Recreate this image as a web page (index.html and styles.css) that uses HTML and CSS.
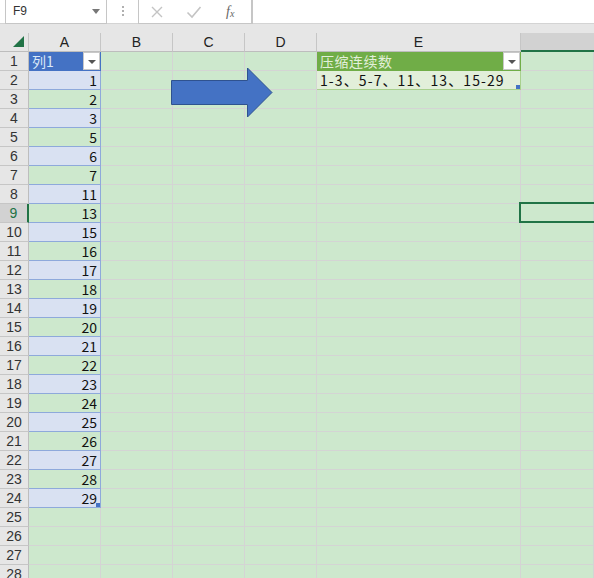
FILE: index.html
```html
<!DOCTYPE html>
<html>
<head>
<meta charset="utf-8">
<link rel="stylesheet" href="styles.css">
</head>
<body>
<div class="app">
  <div class="fbar">
    <div class="namebox"><span class="nb-text">F9</span><span class="nb-arrow"></span></div>
    <div class="grip"><i></i><i></i><i></i></div>
    <div class="btnbox">
      <svg class="ico" width="14" height="14" viewBox="0 0 14 14"><path d="M2 2 L12 12 M12 2 L2 12" stroke="#c4c4c4" stroke-width="1.4" fill="none"/></svg>
      <svg class="ico" width="16" height="14" viewBox="0 0 16 14"><path d="M1.5 7.5 L6 12 L14.5 2" stroke="#c4c4c4" stroke-width="1.6" fill="none"/></svg>
      <span class="fx">f<sub>x</sub></span>
    </div>
    <div class="formula"></div>
  </div>
  <div class="gap"></div>
  <div class="sheet">
    <div class="row hdr">
      <div class="corner"><svg width="12" height="12" viewBox="0 0 12 12"><polygon points="11,0 11,11 0,11" fill="#217346"/></svg></div>
      <div class="ch">A</div><div class="ch">B</div><div class="ch">C</div><div class="ch">D</div><div class="ch">E</div><div class="ch chf"></div>
    </div>
    <div class="row"><div class="rh">1</div><div class="c a ah">列1<span class="dd"></span></div><div class="c"></div><div class="c"></div><div class="c"></div><div class="c e eh">压缩连续数<span class="dd"></span></div><div class="c"></div></div>
    <div class="row"><div class="rh">2</div><div class="c a band">1</div><div class="c"></div><div class="c"></div><div class="c"></div><div class="c e ev">1-3、5-7、11、13、15-29<span class="handle"></span></div><div class="c"></div></div>
    <div class="row"><div class="rh">3</div><div class="c a">2</div><div class="c"></div><div class="c"></div><div class="c"></div><div class="c"></div><div class="c"></div></div>
    <div class="row"><div class="rh">4</div><div class="c a band">3</div><div class="c"></div><div class="c"></div><div class="c"></div><div class="c"></div><div class="c"></div></div>
    <div class="row"><div class="rh">5</div><div class="c a">5</div><div class="c"></div><div class="c"></div><div class="c"></div><div class="c"></div><div class="c"></div></div>
    <div class="row"><div class="rh">6</div><div class="c a band">6</div><div class="c"></div><div class="c"></div><div class="c"></div><div class="c"></div><div class="c"></div></div>
    <div class="row"><div class="rh">7</div><div class="c a">7</div><div class="c"></div><div class="c"></div><div class="c"></div><div class="c"></div><div class="c"></div></div>
    <div class="row"><div class="rh">8</div><div class="c a band">11</div><div class="c"></div><div class="c"></div><div class="c"></div><div class="c"></div><div class="c"></div></div>
    <div class="row"><div class="rh rsel">9</div><div class="c a">13</div><div class="c"></div><div class="c"></div><div class="c"></div><div class="c"></div><div class="c sel"></div></div>
    <div class="row"><div class="rh">10</div><div class="c a band">15</div><div class="c"></div><div class="c"></div><div class="c"></div><div class="c"></div><div class="c"></div></div>
    <div class="row"><div class="rh">11</div><div class="c a">16</div><div class="c"></div><div class="c"></div><div class="c"></div><div class="c"></div><div class="c"></div></div>
    <div class="row"><div class="rh">12</div><div class="c a band">17</div><div class="c"></div><div class="c"></div><div class="c"></div><div class="c"></div><div class="c"></div></div>
    <div class="row"><div class="rh">13</div><div class="c a">18</div><div class="c"></div><div class="c"></div><div class="c"></div><div class="c"></div><div class="c"></div></div>
    <div class="row"><div class="rh">14</div><div class="c a band">19</div><div class="c"></div><div class="c"></div><div class="c"></div><div class="c"></div><div class="c"></div></div>
    <div class="row"><div class="rh">15</div><div class="c a">20</div><div class="c"></div><div class="c"></div><div class="c"></div><div class="c"></div><div class="c"></div></div>
    <div class="row"><div class="rh">16</div><div class="c a band">21</div><div class="c"></div><div class="c"></div><div class="c"></div><div class="c"></div><div class="c"></div></div>
    <div class="row"><div class="rh">17</div><div class="c a">22</div><div class="c"></div><div class="c"></div><div class="c"></div><div class="c"></div><div class="c"></div></div>
    <div class="row"><div class="rh">18</div><div class="c a band">23</div><div class="c"></div><div class="c"></div><div class="c"></div><div class="c"></div><div class="c"></div></div>
    <div class="row"><div class="rh">19</div><div class="c a">24</div><div class="c"></div><div class="c"></div><div class="c"></div><div class="c"></div><div class="c"></div></div>
    <div class="row"><div class="rh">20</div><div class="c a band">25</div><div class="c"></div><div class="c"></div><div class="c"></div><div class="c"></div><div class="c"></div></div>
    <div class="row"><div class="rh">21</div><div class="c a">26</div><div class="c"></div><div class="c"></div><div class="c"></div><div class="c"></div><div class="c"></div></div>
    <div class="row"><div class="rh">22</div><div class="c a band">27</div><div class="c"></div><div class="c"></div><div class="c"></div><div class="c"></div><div class="c"></div></div>
    <div class="row"><div class="rh">23</div><div class="c a">28</div><div class="c"></div><div class="c"></div><div class="c"></div><div class="c"></div><div class="c"></div></div>
    <div class="row"><div class="rh">24</div><div class="c a band">29<span class="handle"></span></div><div class="c"></div><div class="c"></div><div class="c"></div><div class="c"></div><div class="c"></div></div>
    <div class="row"><div class="rh">25</div><div class="c"></div><div class="c"></div><div class="c"></div><div class="c"></div><div class="c"></div><div class="c"></div></div>
    <div class="row"><div class="rh">26</div><div class="c"></div><div class="c"></div><div class="c"></div><div class="c"></div><div class="c"></div><div class="c"></div></div>
    <div class="row"><div class="rh">27</div><div class="c"></div><div class="c"></div><div class="c"></div><div class="c"></div><div class="c"></div><div class="c"></div></div>
    <div class="row"><div class="rh">28</div><div class="c"></div><div class="c"></div><div class="c"></div><div class="c"></div><div class="c"></div><div class="c"></div></div>
    <svg class="arrow" width="104" height="52" viewBox="0 0 104 52"><polygon points="1.5,13.5 77.5,13.5 77.5,1 102,25.5 77.5,50 77.5,37.5 1.5,37.5" fill="#4472c4" stroke="#2f528f" stroke-width="1"/></svg>
  </div>
</div>
</body>
</html>
```
FILE: styles.css
```css
* { box-sizing: border-box; }
html, body { margin: 0; padding: 0; }
body { width: 594px; height: 578px; overflow: hidden; background: #fff; font-family: "Noto Sans CJK SC", "Noto Sans", sans-serif; }
.app { width: 594px; height: 578px; overflow: hidden; }
.fbar { height: 24px; display: flex; align-items: stretch; background: #fff; border-bottom: 1px solid #d4d4d4; }
.namebox { margin-left: 5px; width: 102px; height: 24px; border: 1px solid #c6c6c6; border-top: none; display: flex; align-items: center; justify-content: space-between; padding: 0 6px 1px 7px; }
.nb-text { font-family: "Liberation Sans", sans-serif; font-size: 12px; color: #333; }
.nb-arrow { width: 0; height: 0; border-left: 4px solid transparent; border-right: 4px solid transparent; border-top: 5px solid #777; }
.grip { width: 31px; display: flex; flex-direction: column; align-items: center; justify-content: center; gap: 2px; padding-bottom: 2px; }
.grip i { display: block; width: 2px; height: 2px; background: #b0b0b0; }
.btnbox { width: 114px; height: 24px; border: 1px solid #c6c6c6; border-top: none; display: flex; align-items: center; padding-left: 11px; gap: 22px; }
.fx { font-family: "Liberation Serif", serif; font-style: italic; font-size: 14px; color: #666; margin-left: 2px; line-height: 1; }
.fx sub { font-size: 10px; vertical-align: -1px; }
.formula { flex: 1; height: 24px; border-left: 1px solid #c6c6c6; }
.gap { height: 9px; background: #e6e6e6; }
.sheet { position: relative; background: #cde8cd; }
.row { display: grid; grid-template-columns: 29px 72px 72px 72px 72px 204px 1fr; height: 19px; }
.row.hdr { height: 19px; background: #e6e6e6; }
.corner { border-right: 1px solid #c6c6c6; border-bottom: 1px solid #bdbdbd; display: flex; align-items: flex-end; justify-content: flex-end; padding: 0 3px 3px 0; }
.ch { border-right: 1px solid #c6c6c6; border-bottom: 1px solid #bdbdbd; text-align: center; font-family: "Liberation Sans", sans-serif; font-size: 14px; line-height: 18px; color: #222; }
.ch.chf { background: #d2d2d2; border-bottom: 2px solid #217346; border-right: none; }
.rh { background: #e6e6e6; border-right: 1px solid #bdbdbd; border-bottom: 1px solid #c6c6c6; text-align: center; font-family: "Liberation Sans", sans-serif; font-size: 14px; line-height: 18px; color: #333; }
.rh.rsel { background: #d2d2d2; border-right: 2px solid #217346; color: #217346; }
.c { position: relative; border-right: 1px solid #d4d4d4; border-bottom: 1px solid #d4d4d4; font-size: 14px; line-height: 18px; color: #111; white-space: nowrap; }
.c.a { border-right: 1px solid #8ea9db; border-bottom: 1px solid #8ea9db; text-align: right; padding-right: 3px; font-family: "Noto Sans CJK SC", sans-serif; }
.c.a.band { background: #d9e1f2; }
.c.ah { background: #4472c4; color: #dbe9f7; text-align: left; padding-left: 3px; border-color: #4472c4; }
.c.e { border-right: 1px solid #a9d08e; border-bottom: 1px solid #a9d08e; padding-left: 3px; }
.c.eh { background: #70ad47; color: #e2efda; border-color: #70ad47; letter-spacing: 0.5px; }
.c.ev { background: #e2efda; letter-spacing: 1.1px; }
.dd { position: absolute; right: 0; top: 0; width: 17px; height: 18px; background: #fff; border: 1px solid #c8c8c8; }
.dd::after { content: ""; position: absolute; left: 4px; top: 7px; border-left: 4px solid transparent; border-right: 4px solid transparent; border-top: 4px solid #555; }
.handle { position: absolute; right: 0; bottom: 0; width: 4px; height: 4px; background: #4472c4; }
.c.sel::after { content: ""; position: absolute; left: -2px; top: -2px; right: -4px; bottom: -1px; border: 2px solid #217346; }
.arrow { position: absolute; left: 170px; top: 34px; }
```
